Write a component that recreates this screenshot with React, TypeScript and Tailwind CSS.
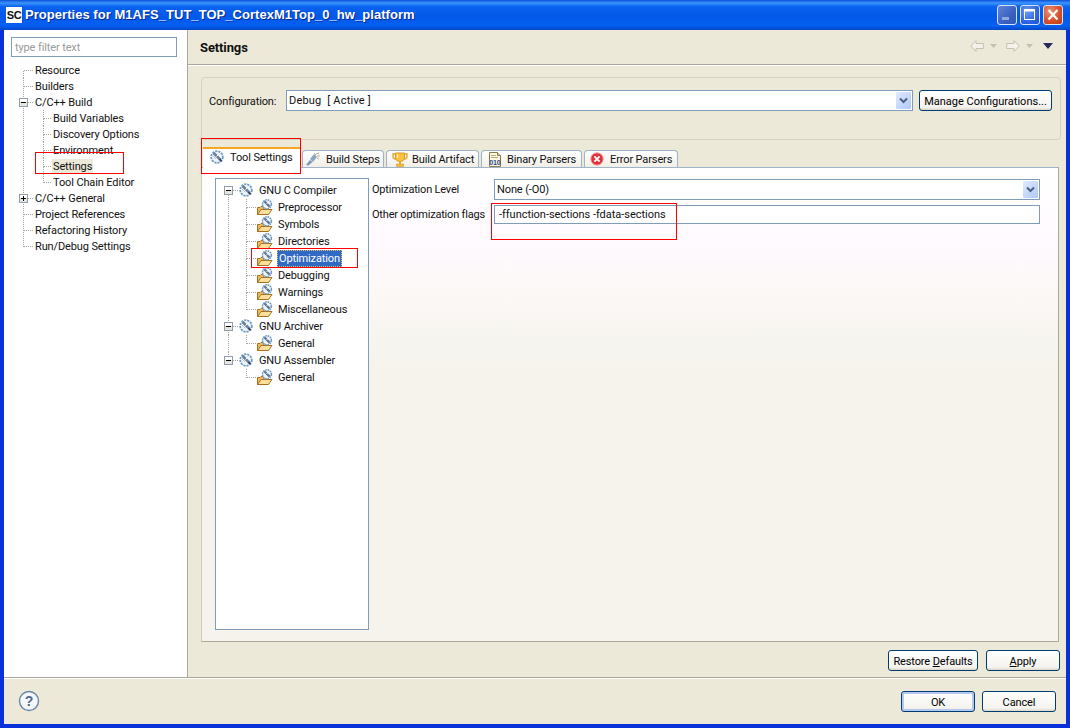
import React from "react";

const FONT = "font-['Roboto','Noto_Sans',sans-serif]";

function Gear({ x = 0, y = 0 }: { x?: number; y?: number }) {
  return (
    <g transform={`translate(${x} ${y})`}>
      <circle cx="7" cy="7" r="5.8" fill="#f2f6fb" stroke="#6e9cc0" strokeWidth="1.8" strokeDasharray="2.2 0.9" />
      <path d="M3.6 3 L10.6 10" stroke="#6b7f9f" strokeWidth="2.6" />
      <path d="M8.8 4.2 L6.4 6.6" stroke="#ffffff" strokeWidth="1" />
      <path d="M3.2 6.2 L6 9" stroke="#b4c6da" strokeWidth="1" />
      <path d="M9.5 9.2 L11.6 11.2" stroke="#2f3f5f" strokeWidth="1.6" />
    </g>
  );
}

function GearFolder({ x = 0, y = 0 }: { x?: number; y?: number }) {
  return (
    <g transform={`translate(${x} ${y})`}>
      <path d="M0.5 7.5 H3 L4 6.5 H7 V14.5 H0.5 Z" fill="#eeb95c" stroke="#a8701e" />
      <path d="M0.5 14.5 L4 9.5 H15 L11.5 14.5 Z" fill="#fbdf9a" stroke="#a8701e" />
      <g transform="translate(4.6 -1) scale(0.76)">
        <circle cx="7" cy="7" r="5.9" fill="#f2f6fb" stroke="#6e9cc0" strokeWidth="2" strokeDasharray="2.2 0.9" />
        <path d="M3.6 3 L10.6 10" stroke="#62769a" strokeWidth="3" />
        <path d="M8.8 4.2 L6.4 6.6" stroke="#ffffff" strokeWidth="1.2" />
      </g>
    </g>
  );
}

function Box({ x, y, open }: { x: number; y: number; open: boolean }) {
  return (
    <g shapeRendering="crispEdges">
      <rect x={x + 0.5} y={y + 0.5} width="8" height="8" fill="#e8e6dc" stroke="#8f9cae" />
      <rect x={x + 1} y={y + 1} width="7" height="3" fill="#ffffff" />
      <path d={`M${x + 2} ${y + 4.5} H${x + 7}`} stroke="#000" />
      {!open && <path d={`M${x + 4.5} ${y + 2} V${y + 7}`} stroke="#000" />}
    </g>
  );
}

type Row = {
  label: string;
  level: number;
  box?: "open" | "closed";
  up0?: boolean;
  down0?: boolean;
  cont0?: boolean;
  up1?: boolean;
  down1?: boolean;
  selected?: "active" | "inactive";
};

function GuideSvg({ row, h, x0, x1, w, kind }: { row: Row; h: number; x0: number; x1: number; w: number; kind: "plain" | "icons" }) {
  const mid = Math.floor(h / 2) + 0.5;
  const dash = { stroke: "#a5a59a", strokeDasharray: "1 1", shapeRendering: "crispEdges" as const, fill: "none" };
  return (
    <svg width={w} height={h} className="block shrink-0" viewBox={`0 0 ${w} ${h}`}>
      {row.cont0 && <path d={`M${x0 + 0.5} 0 V${h}`} {...dash} />}
      {row.up0 && <path d={`M${x0 + 0.5} 0 V${mid}`} {...dash} />}
      {row.down0 && <path d={`M${x0 + 0.5} ${mid} V${h}`} {...dash} />}
      {row.level === 0 && <path d={`M${x0 + 0.5} ${mid} H${x0 + 10}`} {...dash} />}
      {row.up1 && <path d={`M${x1 + 0.5} 0 V${mid}`} {...dash} />}
      {row.down1 && <path d={`M${x1 + 0.5} ${mid} V${h}`} {...dash} />}
      {row.level === 1 && <path d={`M${x1 + 0.5} ${mid} H${x1 + 10}`} {...dash} />}
      {row.box && <Box x={x0 - 4} y={Math.floor(mid) - 4} open={row.box === "open"} />}
      {kind === "icons" && row.level === 0 && <Gear x={x1 - 7} y={mid - 7.5} />}
      {kind === "icons" && row.level === 1 && <GearFolder x={x1 + 11} y={mid - 7.5} />}
    </svg>
  );
}

const leftRows: Row[] = [
  { label: "Resource", level: 0, down0: true },
  { label: "Builders", level: 0, cont0: true },
  { label: "C/C++ Build", level: 0, cont0: true, box: "open" },
  { label: "Build Variables", level: 1, cont0: true, up1: true, down1: true },
  { label: "Discovery Options", level: 1, cont0: true, up1: true, down1: true },
  { label: "Environment", level: 1, cont0: true, up1: true, down1: true },
  { label: "Settings", level: 1, cont0: true, up1: true, down1: true, selected: "inactive" },
  { label: "Tool Chain Editor", level: 1, cont0: true, up1: true },
  { label: "C/C++ General", level: 0, cont0: true, box: "closed" },
  { label: "Project References", level: 0, cont0: true },
  { label: "Refactoring History", level: 0, cont0: true },
  { label: "Run/Debug Settings", level: 0, up0: true },
];

const toolRows: Row[] = [
  { label: "GNU C Compiler", level: 0, down0: true, box: "open" },
  { label: "Preprocessor", level: 1, cont0: true, up1: true, down1: true },
  { label: "Symbols", level: 1, cont0: true, up1: true, down1: true },
  { label: "Directories", level: 1, cont0: true, up1: true, down1: true },
  { label: "Optimization", level: 1, cont0: true, up1: true, down1: true, selected: "active" },
  { label: "Debugging", level: 1, cont0: true, up1: true, down1: true },
  { label: "Warnings", level: 1, cont0: true, up1: true, down1: true },
  { label: "Miscellaneous", level: 1, cont0: true, up1: true },
  { label: "GNU Archiver", level: 0, cont0: true, box: "open" },
  { label: "General", level: 1, cont0: true, up1: true },
  { label: "GNU Assembler", level: 0, up0: true, box: "open" },
  { label: "General", level: 1, up1: true },
];

function LeftTree() {
  return (
    <div className="mt-[5px] flex flex-col">
      {leftRows.map((r) => (
        <div key={r.label} className="flex h-[16px] items-center">
          <GuideSvg row={r} h={16} x0={19} x1={39} w={r.level === 0 ? 30 : 48} kind="plain" />
          <span className={"flex h-[15px] items-center px-[1px] leading-none " + (r.selected === "inactive" ? "bg-[#ece9d8]" : "")}>
            {r.label}
          </span>
        </div>
      ))}
    </div>
  );
}

function ToolTree() {
  return (
    <div className="flex h-[452px] w-[154px] shrink-0 flex-col border border-[#7f9db9] bg-white pt-[3px]">
      {toolRows.map((r, i) => (
        <div key={i} className="flex h-[17px] items-center">
          <GuideSvg row={r} h={17} x0={12} x1={30} w={r.level === 0 ? 42 : 61} kind="icons" />
          {r.selected === "active" ? (
            <span className="flex h-[17px] items-center border border-dotted border-[#e8c060] bg-[#316ac5] px-[1px] leading-none text-white">
              {r.label}
            </span>
          ) : (
            <span className="px-[1px] leading-none">{r.label}</span>
          )}
        </div>
      ))}
    </div>
  );
}

function ComboArrow() {
  return (
    <div className="flex h-[17px] w-[15px] items-center justify-center rounded-[1px] bg-[linear-gradient(135deg,#e1eafe,#aec8f7)]">
      <svg width="9" height="7" viewBox="0 0 9 7">
        <path d="M1 1.5 L4.5 5 L8 1.5" fill="none" stroke="#4d6185" strokeWidth="2" />
      </svg>
    </div>
  );
}

function XpButton({ children, className = "", isDefault }: { children: React.ReactNode; className?: string; isDefault?: boolean }) {
  return (
    <button
      className={
        "flex h-[21px] items-center justify-center whitespace-nowrap rounded-[3px] border border-[#003c74] bg-[linear-gradient(180deg,#ffffff,#f4f3ee_85%,#dcd8c8)] pt-px leading-none text-black " +
        (isDefault ? "shadow-[inset_0_0_0_2px_#b4c8f0] " : "") +
        className
      }
    >
      {children}
    </button>
  );
}

function Tab({ label, icon, className = "" }: { label: string; icon: React.ReactNode; className?: string }) {
  return (
    <div
      className={
        "flex h-[17px] items-center whitespace-nowrap rounded-t-[4px] border border-b-0 border-[#9fb4c8] bg-[linear-gradient(180deg,#ffffff,#f1efe6)] leading-none " +
        className
      }
    >
      {icon}
      <span>{label}</span>
    </div>
  );
}

function TitleButton({ kind }: { kind: "min" | "max" | "close" }) {
  const bg =
    kind === "close"
      ? "bg-[radial-gradient(circle_at_35%_30%,#e8957a,#d8502a_55%,#b8391a)]"
      : kind === "min"
        ? "bg-[linear-gradient(135deg,#5f86d8,#3a60c0_60%,#3058b8)]"
        : "bg-[radial-gradient(circle_at_35%_30%,#6f9af0,#2a62e0_65%,#1c50d0)]";
  return (
    <div className={"flex h-[20px] w-[20px] items-center justify-center rounded-[3px] border border-[#d8e4fc] " + bg}>
      <svg width="16" height="16" viewBox="0 0 16 16">
        {kind === "min" && <rect x="3" y="10" width="7" height="3" fill="#8fa8e0" />}
        {kind === "max" && (
          <g fill="none" stroke="#fff">
            <rect x="2.5" y="2.5" width="10" height="10" />
            <path d="M2.5 3.5 H12.5" strokeWidth="2" />
          </g>
        )}
        {kind === "close" && <path d="M3.5 3 L12.5 12.5 M12.5 3 L3.5 12.5" stroke="#fff" strokeWidth="2.2" />}
      </svg>
    </div>
  );
}

function NavArrow({ flip }: { flip?: boolean }) {
  return (
    <div className="flex items-center">
      <svg width="14" height="12" viewBox="0 0 14 12" className={flip ? "-scale-x-100" : ""}>
        <path d="M6 0.5 L0.8 6 L6 11.5 V8.5 H13.3 V3.5 H6 Z" fill="#f4f2ea" stroke="#c4c1b4" />
      </svg>
      <svg width="7" height="4" viewBox="0 0 7 4" className="ml-[6px]">
        <path d="M0 0 H7 L3.5 4 Z" fill="#c4c1b4" />
      </svg>
    </div>
  );
}

export default function App() {
  return (
    <div className={"relative flex h-[728px] w-[1070px] flex-col overflow-hidden bg-[#0831d9] text-[11px] tracking-[-0.12px] text-[#111] " + FONT}>
      {/* Title bar */}
      <div className="flex h-[30px] shrink-0 items-center bg-[linear-gradient(180deg,#0a4fd8_0%,#3d95ff_10%,#0a62f0_22%,#0258e8_55%,#0560f2_85%,#0246c8_100%)] pl-[6px] pr-[7px]">
        <div className="flex h-[16px] w-[16px] items-center justify-center bg-white font-['Liberation_Sans',sans-serif] text-[11px] font-bold leading-none tracking-[-0.5px] text-[#111]">
          SC
        </div>
        <div className="ml-[3px] font-['Liberation_Sans',sans-serif] text-[13px] font-bold tracking-[0.04px] text-white [text-shadow:1px_1px_0_#0a2a90]">
          Properties for M1AFS_TUT_TOP_CortexM1Top_0_hw_platform
        </div>
        <div className="ml-auto flex gap-[3px]">
          <TitleButton kind="min" />
          <TitleButton kind="max" />
          <TitleButton kind="close" />
        </div>
      </div>

      {/* Window body */}
      <div className="mx-[4px] mb-[4px] flex min-h-0 flex-1 flex-col bg-[#ece9d8]">
        <div className="flex min-h-0 flex-1">
          {/* Left pane */}
          <div className="w-[184px] shrink-0 border-r border-[#aca899] bg-white pl-[7px] pt-[7px]">
            <div className="flex h-[20px] w-[166px] items-center border border-[#7f9db9] px-[3px] pt-[2px] text-[#9a9a9a]">
              type filter text
            </div>
            <div className="-ml-[7px]">
              <LeftTree />
            </div>
          </div>

          {/* Right pane */}
          <div className="flex min-w-0 flex-1 flex-col">
            <div className="flex h-[35px] shrink-0 items-center border-b border-[#aca899] pl-[12px] pr-[12px] pt-[2px]">
              <span className="text-[13px] font-bold">Settings</span>
              <div className="ml-auto flex items-center gap-[9px] pb-[4px] pr-px">
                <NavArrow />
                <NavArrow flip />
                <svg width="10" height="6" viewBox="0 0 10 6" className="ml-[1px]">
                  <path d="M0 0 H10 L5 6 Z" fill="#2a2a5a" />
                </svg>
              </div>
            </div>
            <div className="h-px bg-white" />

            <div className="flex flex-1 flex-col pl-[13px] pr-[5px] pt-[11px]">
              {/* Configuration group */}
              <div className="flex h-[63px] shrink-0 items-start rounded-[4px] border border-[#d6d2c2] pl-[7px] pr-[8px] pt-[12px]">
                <span className="mt-[4px] w-[77px] shrink-0 leading-[15px]">Configuration:</span>
                <div className="flex h-[21px] flex-1 items-center justify-between border border-[#7f9db9] bg-white pl-[2px] pr-[1px]">
                  <span className="whitespace-pre pt-px tracking-[0.2px]">Debug  [ Active ]</span>
                  <ComboArrow />
                </div>
                <XpButton className="ml-[6px] w-[133px] tracking-[0px]">Manage Configurations...</XpButton>
              </div>

              {/* Tabs */}
              <div className="mt-[7px] flex h-[20px] shrink-0 items-end gap-[2px] pl-[2px]">
                <div className="relative z-10 flex h-[21px] w-[97px] translate-y-px items-start whitespace-nowrap border-t-2 border-[#f5a623] bg-white pl-[7px] pt-[1px]">
                  <svg width="15" height="15" viewBox="0 0 15 15" className="mr-[5px]">
                    <Gear />
                  </svg>
                  <span>Tool Settings</span>
                </div>
                <Tab
                  label="Build Steps"
                  className="w-[82px] pl-[2px]"
                  icon={
                    <svg width="16" height="14" viewBox="0 0 16 14" className="mr-[5px]">
                      <path d="M1 13 L5 8 L7.5 10 L3.5 13.5 Z" fill="#7f98b5" />
                      <path d="M5 7 L9 2 L12 5 L8 10 Z" fill="#8ba6c2" />
                      <path d="M9 1 L11 3 M11 2 L14 1 M12 4 L15 4 M12 6 L14 7" stroke="#b8aa86" strokeWidth="1" />
                    </svg>
                  }
                />
                <Tab
                  label="Build Artifact"
                  className="w-[93px] pl-[5px]"
                  icon={
                    <svg width="16" height="15" viewBox="0 0 16 15" className="mr-[4px]">
                      <path d="M3.5 1 H12.5 V6 C12.5 8.5 10 9.5 8 9.5 C6 9.5 3.5 8.5 3.5 6 Z" fill="#f8c244" stroke="#d99a20" />
                      <path d="M3.5 2 H1 V4.5 C1 6 2.5 7 4 7 M12.5 2 H15 V4.5 C15 6 13.5 7 12 7" fill="none" stroke="#e0a428" strokeWidth="1.3" />
                      <path d="M7 9.5 H9 V12 H7 Z" fill="#e8ac30" />
                      <path d="M4.5 12 H11.5 V14.5 H4.5 Z" fill="#f4bb3c" stroke="#d99a20" strokeWidth="0.6" />
                      <path d="M5.5 2 V6" stroke="#fff0b8" strokeWidth="1.2" />
                    </svg>
                  }
                />
                <Tab
                  label="Binary Parsers"
                  className="w-[101px] pl-[6px]"
                  icon={
                    <svg width="14" height="15" viewBox="0 0 14 15" className="mr-[5px]">
                      <path d="M1.5 0.5 H9.5 L12.5 3.5 V14.5 H1.5 Z" fill="#fbf6e0" stroke="#8a7a50" />
                      <path d="M9.5 0.5 V3.5 H12.5" fill="#e8d8a8" stroke="#8a7a50" />
                      <path d="M3 3.5 H8 M3 5.5 H10" stroke="#b8ab80" />
                      <text x="7" y="13" textAnchor="middle" fontSize="7" fontWeight="700" fill="#264a80" fontFamily="Liberation Sans">010</text>
                    </svg>
                  }
                />
                <Tab
                  label="Error Parsers"
                  className="w-[94px] pl-[5px]"
                  icon={
                    <svg width="14" height="14" viewBox="0 0 14 14" className="mr-[6px]">
                      <circle cx="7" cy="7" r="6.2" fill="#e0303a" stroke="#f4a0a0" />
                      <path d="M4.4 4.4 L9.6 9.6 M9.6 4.4 L4.4 9.6" stroke="#fff" strokeWidth="1.9" />
                    </svg>
                  }
                />
              </div>

              {/* Tab panel */}
              <div className="flex h-[475px] w-[858px] shrink-0 border border-[#aca899] border-l-[#d0ccbc] border-t-[#9fb4c8] bg-[linear-gradient(180deg,#ffffff_0%,#fffaff_16%,#fbf8f6_26%,#f5f3ec_42%,#f5f3ec_100%)] pl-[13px] pt-[10px]">
                <ToolTree />
                <div className="ml-[3px] mt-px flex-1 pr-[18px]">
                  <div className="flex h-[20px] items-center">
                    <span className="w-[122px] shrink-0 pt-[2px] tracking-[-0.2px]">Optimization Level</span>
                    <div className="flex h-[21px] flex-1 items-center justify-between border border-[#7f9db9] bg-white pl-[2px] pr-[1px]">
                      <span className="pt-[2px]">None (-O0)</span>
                      <ComboArrow />
                    </div>
                  </div>
                  <div className="mt-[6px] flex h-[19px] items-center">
                    <span className="w-[122px] shrink-0 whitespace-nowrap pt-[2px] tracking-[-0.2px]">Other optimization flags</span>
                    <div className="flex h-[19px] flex-1 items-center border border-[#7f9db9] bg-white px-[4px] pt-[2px] tracking-[-0.03px]">
                      -ffunction-sections -fdata-sections
                    </div>
                  </div>
                </div>
              </div>

              {/* Restore / Apply */}
              <div className="mt-[8px] flex justify-end gap-[8px] pr-[1px]">
                <XpButton className="w-[90px]">
                  <span>
                    Restore <u>D</u>efaults
                  </span>
                </XpButton>
                <XpButton className="w-[74px]">
                  <span>
                    <u>A</u>pply
                  </span>
                </XpButton>
              </div>
            </div>
          </div>
        </div>

        {/* Footer */}
        <div className="flex h-[47px] shrink-0 items-start border-t border-[#aca899] pl-[14px] pr-[10px] pt-[12px] shadow-[inset_0_1px_0_#fff]">
          <svg width="22" height="22" viewBox="0 0 22 22">
            <circle cx="11" cy="11" r="9.5" fill="#f4f6fa" stroke="#6a86a8" strokeWidth="1.4" />
            <text x="11" y="16" textAnchor="middle" fontSize="14" fontWeight="700" fill="#4d6a90" fontFamily="Liberation Sans">?</text>
          </svg>
          <div className="ml-auto mt-px flex gap-[7px]">
            <XpButton isDefault className="w-[74px]">OK</XpButton>
            <XpButton className="w-[74px]">Cancel</XpButton>
          </div>
        </div>
      </div>

      {/* Red annotation boxes drawn over the screenshot */}
      <div className="pointer-events-none absolute left-[35px] top-[152px] h-[22px] w-[89px] border border-[#f00]" />
      <div className="pointer-events-none absolute left-[201px] top-[138px] h-[36px] w-[100px] border border-[#f00]" />
      <div className="pointer-events-none absolute left-[251px] top-[248px] h-[20px] w-[107px] border border-[#f00]" />
      <div className="pointer-events-none absolute left-[491px] top-[203px] h-[37px] w-[186px] border border-[#f00]" />
    </div>
  );
}
